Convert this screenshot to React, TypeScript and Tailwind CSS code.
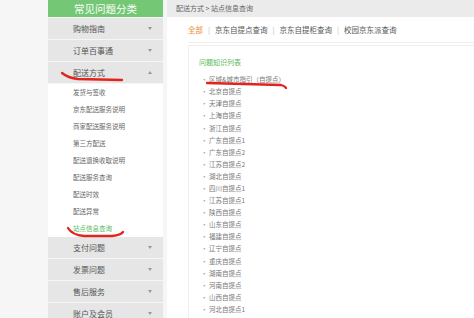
import React from "react";

const font = { fontFamily: '"Noto Sans CJK SC", "Noto Sans", sans-serif' };

function Arrow({ up }: { up?: boolean }) {
  return up ? (
    <span className="w-0 h-0 border-l-[2.5px] border-r-[2.5px] border-b-[3px] border-l-transparent border-r-transparent border-b-[#999]" />
  ) : (
    <span className="w-0 h-0 border-l-[2.5px] border-r-[2.5px] border-t-[3px] border-l-transparent border-r-transparent border-t-[#999]" />
  );
}

function Row({ label, up }: { label: string; up?: boolean }) {
  return (
    <div className="h-[21px] mb-[1px] bg-[#e6e6e6] flex items-center justify-between pl-[25px] pr-[11px] text-[8px] text-[#555] shrink-0">
      <span>{label}</span>
      <Arrow up={up} />
    </div>
  );
}

const subs = [
  "发货与签收",
  "京东配送服务说明",
  "商家配送服务说明",
  "第三方配送",
  "配送退换收取说明",
  "配送服务查询",
  "配送时效",
  "配送异常",
  "站点信息查询",
];

const list = [
  "区域&城市指引（自提点）",
  "北京自提点",
  "天津自提点",
  "上海自提点",
  "浙江自提点",
  "广东自提点1",
  "广东自提点2",
  "江苏自提点2",
  "湖北自提点",
  "四川自提点1",
  "江苏自提点1",
  "陕西自提点",
  "山东自提点",
  "福建自提点",
  "辽宁自提点",
  "重庆自提点",
  "湖南自提点",
  "河南自提点",
  "山西自提点",
  "河北自提点1",
];

export default function App() {
  return (
    <div
      className="relative w-[474px] h-[318px] overflow-hidden bg-[#f6f6f6] flex"
      style={font}
    >
      <div className="w-[48px] shrink-0" />
      <div className="w-[115px] shrink-0 flex flex-col">
        <div className="h-[17px] mb-[1px] bg-[#74c774] text-white text-[10.5px] flex items-center justify-center shrink-0">
          常见问题分类
        </div>
        <Row label="购物指南" />
        <Row label="订单百事通" />
        <Row label="配送方式" up />
        <div className="bg-white flex flex-col shrink-0">
          {subs.map((s, i) => (
            <div
              key={s}
              className={
                "h-[17px] flex items-center pl-[25px] text-[6.5px] " +
                (i === subs.length - 1 ? "text-[#5cb85c]" : "text-[#666]")
              }
            >
              {s}
            </div>
          ))}
        </div>
        <Row label="支付问题" />
        <Row label="发票问题" />
        <Row label="售后服务" />
        <Row label="账户及会员" />
      </div>
      <div className="w-[4px] shrink-0" />
      <div className="flex-1 bg-white flex flex-col">
        <div className="h-[17px] bg-[#ebebeb] flex items-center pl-[9px] text-[7px] text-[#666] shrink-0">
          配送方式 &gt; 站点信息查询
        </div>
        <div className="ml-[21px] h-[26px] border-b border-[#eeeeee] flex items-center gap-[5px] text-[7.5px] text-[#555] shrink-0">
          <span className="text-[#f0882a]">全部</span>
          <span className="text-[#bbb]">|</span>
          <span>京东自提点查询</span>
          <span className="text-[#bbb]">|</span>
          <span>京东自提柜查询</span>
          <span className="text-[#bbb]">|</span>
          <span>校园京东派查询</span>
        </div>
        <div className="ml-[21px] mt-[2px] flex-1 border-t border-l border-[#eeeeee] pl-[10px] pt-[10px]">
          <div className="h-[12px] flex items-center text-[7px] text-[#5cb85c]">问题知识列表</div>
          <ul className="mt-[6px] flex flex-col">
            {list.map((s) => (
              <li key={s} className="h-[12.1px] flex items-center text-[6.5px] text-[#777]">
                <span className="w-[10px] pl-[2px] text-[#999]">·</span>
                <span>{s}</span>
              </li>
            ))}
          </ul>
        </div>
      </div>
      <svg
        className="absolute left-0 top-0 pointer-events-none"
        width="474"
        height="318"
        viewBox="0 0 474 318"
      >
        <path
          d="M62 73 Q68 78 78 79 L122 80"
          stroke="#e3241e"
          strokeWidth="2.3"
          fill="none"
          strokeLinecap="round"
        />
        <path
          d="M68 228 Q72 235 84 236 L112 236 Q121 235 123 232"
          stroke="#e3241e"
          strokeWidth="2.3"
          fill="none"
          strokeLinecap="round"
        />
        <path
          d="M207 83 L281 85 Q285 86 286 88"
          stroke="#e3241e"
          strokeWidth="2.3"
          fill="none"
          strokeLinecap="round"
        />
      </svg>
    </div>
  );
}
